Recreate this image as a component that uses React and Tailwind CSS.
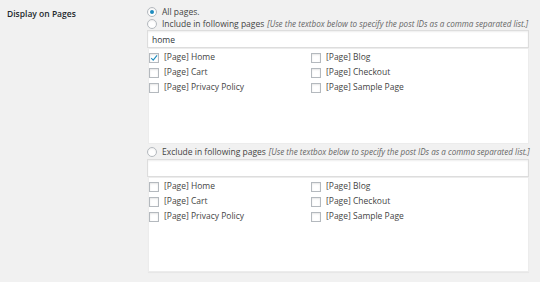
const pages = [
    ['[Page] Home', '[Page] Blog'],
    ['[Page] Cart', '[Page] Checkout'],
    ['[Page] Privacy Policy', '[Page] Sample Page'],
];

function Radio({ checked }) {
    return (
        <span className="w-[10px] h-[10px] rounded-full border border-[#b4b9be] bg-white shadow-[inset_0_1px_2px_rgba(0,0,0,0.07)] flex items-center justify-center shrink-0">
            {checked && <span className="w-[4px] h-[4px] rounded-full bg-[#1e8cbe]" />}
        </span>
    );
}

function Checkbox({ checked }) {
    return (
        <span className="w-[10px] h-[10px] border border-[#b4b9be] bg-white shadow-[inset_0_1px_2px_rgba(0,0,0,0.1)] flex items-center justify-center shrink-0">
            {checked && (
                <svg viewBox="0 0 10 10" className="w-[10px] h-[10px]">
                    <path d="M1.5 5.2 L4 7.6 L8.8 1.8" fill="none" stroke="#1e8cbe" strokeWidth="1.4" />
                </svg>
            )}
        </span>
    );
}

function PageList({ checkedFirst, className }) {
    return (
        <div className={`ml-[1px] bg-white border border-[#ececec] ${className}`}>
            {pages.map((row, i) => (
                <div key={i} className="grid grid-cols-[162px_1fr] h-[15px] items-center">
                    {row.map((name, j) => (
                        <label key={name} className="flex items-center gap-[5px]">
                            <Checkbox checked={checkedFirst && i === 0 && j === 0} />
                            <span className="whitespace-nowrap">{name}</span>
                        </label>
                    ))}
                </div>
            ))}
        </div>
    );
}

function RadioRow({ checked, label, hint, className }) {
    return (
        <div className={`flex items-center gap-[5px] h-[12px] whitespace-nowrap ${className || ''}`}>
            <Radio checked={checked} />
            <span>
                {label}
                {hint && <i className="text-[#666] text-[8.1px] ml-[3px]">{hint}</i>}
            </span>
        </div>
    );
}

const hintText = '[Use the textbox below to specify the post IDs as a comma separated list.]';

export default function App() {
    return (
        <div className="w-[540px] h-[282px] bg-[#f1f1f1] flex font-['Open_Sans',sans-serif] text-[8.5px] text-[#444] overflow-hidden">
            <div className="w-[147px] shrink-0 pl-[7px] pt-[8px] font-semibold text-[#23282d] text-[8.5px]">
                Display on Pages
            </div>
            <div className="flex-1 min-w-0 mr-[11px] pt-[6px]">
                <RadioRow checked label="All pages." />
                <RadioRow label="Include in following pages" hint={hintText} />
                <input
                    type="text"
                    defaultValue="home"
                    className="block w-full h-[18px] px-[4px] bg-white border border-[#ddd] shadow-[inset_0_1px_2px_rgba(0,0,0,0.07)] text-[#32373c] outline-none"
                />
                <PageList checkedFirst className="h-[96px] pt-[1px]" />
                <RadioRow label="Exclude in following pages" hint={hintText} className="mt-[2px]" />
                <input
                    type="text"
                    className="block w-full h-[18px] mt-[1px] px-[4px] bg-white border border-[#ddd] shadow-[inset_0_1px_2px_rgba(0,0,0,0.07)] outline-none"
                />
                <PageList className="h-[95px] pt-[1px] shadow-[0_1px_1px_rgba(0,0,0,0.04)]" />
            </div>
        </div>
    );
}
